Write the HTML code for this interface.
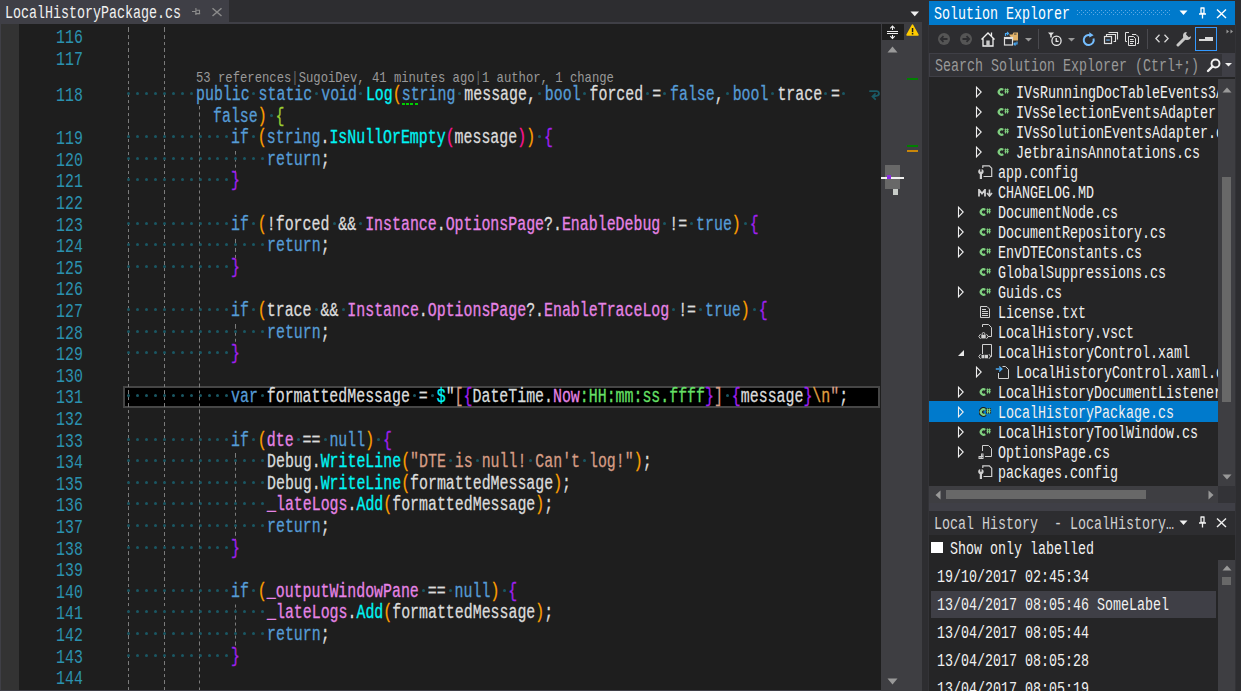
<!DOCTYPE html><html><head><meta charset="utf-8"><style>
*{margin:0;padding:0;box-sizing:border-box}
html,body{width:1241px;height:691px;overflow:hidden;background:#2d2d30}
body{position:relative;font-family:"Liberation Mono",monospace}
.a{position:absolute}
.t{position:absolute;white-space:pre;transform-origin:0 0}
.c{-webkit-text-stroke:0.3px currentColor}
.dot{position:absolute;width:3px;height:3px;border-radius:50%;background:#1a5763}
.g{position:absolute;width:1px;background:repeating-linear-gradient(to bottom,#7c7c7c 0,#7c7c7c 3.4px,transparent 3.4px,transparent 6.45px)}
</style></head><body>
<div class="a" style="left:0px;top:0px;width:929px;height:22px;background:#2d2d30;"></div>
<div class="a" style="left:0px;top:0px;width:229px;height:22px;background:#3f3f46;"></div>
<div class="t " style="left:5.00px;top:3.83px;font-size:17.5px;line-height:19.824px;transform:scaleX(0.7619);color:#f1f1f1;">LocalHistoryPackage.cs</div>
<svg class="a" style="left:191px;top:7px" width="11" height="10" viewBox="0 0 11 10"><path d="M1 4.5H4.5M4.9 1V8M4.9 3.3H8.5V6.5H4.9" stroke="#8c8c8c" stroke-width="1.1" fill="none"/><rect x="4.5" y="6" width="4.6" height="1.3" fill="#8c8c8c"/></svg>
<svg class="a" style="left:211px;top:7px" width="12" height="10" viewBox="0 0 12 10"><path d="M1.5 1.2L10.5 9M10.5 1.2L1.5 9" stroke="#8a8a8a" stroke-width="1.5" fill="none"/></svg>
<svg class="a" style="left:910px;top:11px" width="10" height="6" viewBox="0 0 10 6"><path d="M0.5 0.5H9L4.75 5.2Z" fill="#f0f0f0"/></svg>
<div class="a" style="left:0px;top:22px;width:922px;height:2px;background:#3f3f46;"></div>
<div class="a" style="left:0px;top:24px;width:1px;height:667px;background:#3f3f46;"></div>
<div class="a" style="left:1px;top:24px;width:18px;height:666px;background:#333333;"></div>
<div class="a" style="left:19px;top:24px;width:862px;height:666px;background:#1e1e1e;"></div>
<div class="a" style="left:0px;top:690px;width:881px;height:1px;background:#3f3f46;"></div>
<div class="a" style="left:881px;top:22px;width:41px;height:669px;background:#3e3e42;"></div>
<div class="a" style="left:922px;top:0px;width:7px;height:691px;background:#2d2d30;"></div>
<div class="a" style="left:928px;top:24px;width:1px;height:667px;background:#333337;"></div>
<div class="t " style="left:56.00px;top:27.35px;font-size:20px;line-height:22.656px;transform:scaleX(0.7450);color:#2b91af;">116</div>
<div class="t " style="left:56.00px;top:49.35px;font-size:20px;line-height:22.656px;transform:scaleX(0.7450);color:#2b91af;">117</div>
<div class="t " style="left:56.00px;top:85.35px;font-size:20px;line-height:22.656px;transform:scaleX(0.7450);color:#2b91af;">118</div>
<div class="t " style="left:56.00px;top:128.35px;font-size:20px;line-height:22.656px;transform:scaleX(0.7450);color:#2b91af;">119</div>
<div class="t " style="left:56.00px;top:150.35px;font-size:20px;line-height:22.656px;transform:scaleX(0.7450);color:#2b91af;">120</div>
<div class="t " style="left:56.00px;top:171.35px;font-size:20px;line-height:22.656px;transform:scaleX(0.7450);color:#2b91af;">121</div>
<div class="t " style="left:56.00px;top:193.35px;font-size:20px;line-height:22.656px;transform:scaleX(0.7450);color:#2b91af;">122</div>
<div class="t " style="left:56.00px;top:215.35px;font-size:20px;line-height:22.656px;transform:scaleX(0.7450);color:#2b91af;">123</div>
<div class="t " style="left:56.00px;top:236.35px;font-size:20px;line-height:22.656px;transform:scaleX(0.7450);color:#2b91af;">124</div>
<div class="t " style="left:56.00px;top:258.35px;font-size:20px;line-height:22.656px;transform:scaleX(0.7450);color:#2b91af;">125</div>
<div class="t " style="left:56.00px;top:279.35px;font-size:20px;line-height:22.656px;transform:scaleX(0.7450);color:#2b91af;">126</div>
<div class="t " style="left:56.00px;top:301.35px;font-size:20px;line-height:22.656px;transform:scaleX(0.7450);color:#2b91af;">127</div>
<div class="t " style="left:56.00px;top:323.35px;font-size:20px;line-height:22.656px;transform:scaleX(0.7450);color:#2b91af;">128</div>
<div class="t " style="left:56.00px;top:344.35px;font-size:20px;line-height:22.656px;transform:scaleX(0.7450);color:#2b91af;">129</div>
<div class="t " style="left:56.00px;top:366.35px;font-size:20px;line-height:22.656px;transform:scaleX(0.7450);color:#2b91af;">130</div>
<div class="t " style="left:56.00px;top:387.35px;font-size:20px;line-height:22.656px;transform:scaleX(0.7450);color:#2b91af;">131</div>
<div class="t " style="left:56.00px;top:409.35px;font-size:20px;line-height:22.656px;transform:scaleX(0.7450);color:#2b91af;">132</div>
<div class="t " style="left:56.00px;top:431.35px;font-size:20px;line-height:22.656px;transform:scaleX(0.7450);color:#2b91af;">133</div>
<div class="t " style="left:56.00px;top:452.35px;font-size:20px;line-height:22.656px;transform:scaleX(0.7450);color:#2b91af;">134</div>
<div class="t " style="left:56.00px;top:474.35px;font-size:20px;line-height:22.656px;transform:scaleX(0.7450);color:#2b91af;">135</div>
<div class="t " style="left:56.00px;top:495.35px;font-size:20px;line-height:22.656px;transform:scaleX(0.7450);color:#2b91af;">136</div>
<div class="t " style="left:56.00px;top:517.35px;font-size:20px;line-height:22.656px;transform:scaleX(0.7450);color:#2b91af;">137</div>
<div class="t " style="left:56.00px;top:539.35px;font-size:20px;line-height:22.656px;transform:scaleX(0.7450);color:#2b91af;">138</div>
<div class="t " style="left:56.00px;top:560.35px;font-size:20px;line-height:22.656px;transform:scaleX(0.7450);color:#2b91af;">139</div>
<div class="t " style="left:56.00px;top:582.35px;font-size:20px;line-height:22.656px;transform:scaleX(0.7450);color:#2b91af;">140</div>
<div class="t " style="left:56.00px;top:603.35px;font-size:20px;line-height:22.656px;transform:scaleX(0.7450);color:#2b91af;">141</div>
<div class="t " style="left:56.00px;top:625.35px;font-size:20px;line-height:22.656px;transform:scaleX(0.7450);color:#2b91af;">142</div>
<div class="t " style="left:56.00px;top:647.35px;font-size:20px;line-height:22.656px;transform:scaleX(0.7450);color:#2b91af;">143</div>
<div class="t " style="left:56.00px;top:668.35px;font-size:20px;line-height:22.656px;transform:scaleX(0.7450);color:#2b91af;">144</div>
<div class="a" style="left:123px;top:386px;width:757px;height:22px;background:#000000;border:2px solid #464646;"></div>
<div class="g" style="left:128px;top:24.0px;height:666.0px;background-position:0 5.06px"></div>
<div class="g" style="left:164px;top:24.0px;height:666.0px;background-position:0 5.06px"></div>
<div class="g" style="left:199px;top:106.0px;height:584.0px;background-position:0 0.46px"></div>
<div class="g" style="left:235px;top:151.0px;height:21.6px;background-position:0 0.61px"></div>
<div class="g" style="left:235px;top:237.0px;height:21.6px;background-position:0 4.91px"></div>
<div class="g" style="left:235px;top:324.0px;height:21.6px;background-position:0 1.76px"></div>
<div class="g" style="left:235px;top:453.0px;height:86.6px;background-position:0 1.76px"></div>
<div class="g" style="left:235px;top:604.0px;height:43.6px;background-position:0 5.56px"></div>
<div class="dot" style="left:127.0px;top:92.0px"></div>
<div class="dot" style="left:135.9px;top:92.0px"></div>
<div class="dot" style="left:144.9px;top:92.0px"></div>
<div class="dot" style="left:153.8px;top:92.0px"></div>
<div class="dot" style="left:162.8px;top:92.0px"></div>
<div class="dot" style="left:171.7px;top:92.0px"></div>
<div class="dot" style="left:180.6px;top:92.0px"></div>
<div class="dot" style="left:189.6px;top:92.0px"></div>
<div class="dot" style="left:252.2px;top:92.0px"></div>
<div class="dot" style="left:314.7px;top:92.0px"></div>
<div class="dot" style="left:359.4px;top:92.0px"></div>
<div class="dot" style="left:457.8px;top:92.0px"></div>
<div class="dot" style="left:538.2px;top:92.0px"></div>
<div class="dot" style="left:582.9px;top:92.0px"></div>
<div class="dot" style="left:645.5px;top:92.0px"></div>
<div class="dot" style="left:663.4px;top:92.0px"></div>
<div class="dot" style="left:726.0px;top:92.0px"></div>
<div class="dot" style="left:770.7px;top:92.0px"></div>
<div class="dot" style="left:824.3px;top:92.0px"></div>
<div class="dot" style="left:842.2px;top:92.0px"></div>
<div class="t c" style="left:195.52px;top:84.35px;font-size:20px;line-height:22.656px;transform:scaleX(0.7450);color:#dcdcdc;"><span style="color:#569cd6">public</span> <span style="color:#569cd6">static</span> <span style="color:#569cd6">void</span> <span style="color:#00f5f5">Log</span><span style="color:#ffa000">(</span><span style="color:#569cd6">string</span> <span style="color:#dcdcdc">message</span><span style="color:#dcdcdc">,</span> <span style="color:#569cd6">bool</span> <span style="color:#dcdcdc">forced</span> <span style="color:#dcdcdc">=</span> <span style="color:#569cd6">false</span><span style="color:#dcdcdc">,</span> <span style="color:#569cd6">bool</span> <span style="color:#dcdcdc">trace</span> <span style="color:#dcdcdc">=</span> </div>
<div class="dot" style="left:270.0px;top:114.0px"></div>
<div class="t c" style="left:213.40px;top:106.35px;font-size:20px;line-height:22.656px;transform:scaleX(0.7450);color:#dcdcdc;"><span style="color:#569cd6">false</span><span style="color:#ffa000">)</span> <span style="color:#9acd32">{</span></div>
<div class="dot" style="left:127.0px;top:135.0px"></div>
<div class="dot" style="left:135.9px;top:135.0px"></div>
<div class="dot" style="left:144.9px;top:135.0px"></div>
<div class="dot" style="left:153.8px;top:135.0px"></div>
<div class="dot" style="left:162.8px;top:135.0px"></div>
<div class="dot" style="left:171.7px;top:135.0px"></div>
<div class="dot" style="left:180.6px;top:135.0px"></div>
<div class="dot" style="left:189.6px;top:135.0px"></div>
<div class="dot" style="left:198.5px;top:135.0px"></div>
<div class="dot" style="left:207.5px;top:135.0px"></div>
<div class="dot" style="left:216.4px;top:135.0px"></div>
<div class="dot" style="left:225.3px;top:135.0px"></div>
<div class="dot" style="left:252.2px;top:135.0px"></div>
<div class="dot" style="left:538.2px;top:135.0px"></div>
<div class="t c" style="left:231.28px;top:127.35px;font-size:20px;line-height:22.656px;transform:scaleX(0.7450);color:#dcdcdc;"><span style="color:#569cd6">if</span> <span style="color:#ffa000">(</span><span style="color:#569cd6">string</span><span style="color:#dcdcdc">.</span><span style="color:#00f5f5">IsNullOrEmpty</span><span style="color:#ff1493">(</span><span style="color:#dcdcdc">message</span><span style="color:#ff1493">)</span><span style="color:#ffa000">)</span> <span style="color:#a020f0">{</span></div>
<div class="dot" style="left:127.0px;top:157.0px"></div>
<div class="dot" style="left:135.9px;top:157.0px"></div>
<div class="dot" style="left:144.9px;top:157.0px"></div>
<div class="dot" style="left:153.8px;top:157.0px"></div>
<div class="dot" style="left:162.8px;top:157.0px"></div>
<div class="dot" style="left:171.7px;top:157.0px"></div>
<div class="dot" style="left:180.6px;top:157.0px"></div>
<div class="dot" style="left:189.6px;top:157.0px"></div>
<div class="dot" style="left:198.5px;top:157.0px"></div>
<div class="dot" style="left:207.5px;top:157.0px"></div>
<div class="dot" style="left:216.4px;top:157.0px"></div>
<div class="dot" style="left:225.3px;top:157.0px"></div>
<div class="dot" style="left:234.3px;top:157.0px"></div>
<div class="dot" style="left:243.2px;top:157.0px"></div>
<div class="dot" style="left:252.2px;top:157.0px"></div>
<div class="dot" style="left:261.1px;top:157.0px"></div>
<div class="t c" style="left:267.04px;top:149.35px;font-size:20px;line-height:22.656px;transform:scaleX(0.7450);color:#dcdcdc;"><span style="color:#569cd6">return</span><span style="color:#dcdcdc">;</span></div>
<div class="dot" style="left:127.0px;top:178.0px"></div>
<div class="dot" style="left:135.9px;top:178.0px"></div>
<div class="dot" style="left:144.9px;top:178.0px"></div>
<div class="dot" style="left:153.8px;top:178.0px"></div>
<div class="dot" style="left:162.8px;top:178.0px"></div>
<div class="dot" style="left:171.7px;top:178.0px"></div>
<div class="dot" style="left:180.6px;top:178.0px"></div>
<div class="dot" style="left:189.6px;top:178.0px"></div>
<div class="dot" style="left:198.5px;top:178.0px"></div>
<div class="dot" style="left:207.5px;top:178.0px"></div>
<div class="dot" style="left:216.4px;top:178.0px"></div>
<div class="dot" style="left:225.3px;top:178.0px"></div>
<div class="t c" style="left:231.28px;top:170.35px;font-size:20px;line-height:22.656px;transform:scaleX(0.7450);color:#dcdcdc;"><span style="color:#a020f0">}</span></div>
<div class="dot" style="left:127.0px;top:222.0px"></div>
<div class="dot" style="left:135.9px;top:222.0px"></div>
<div class="dot" style="left:144.9px;top:222.0px"></div>
<div class="dot" style="left:153.8px;top:222.0px"></div>
<div class="dot" style="left:162.8px;top:222.0px"></div>
<div class="dot" style="left:171.7px;top:222.0px"></div>
<div class="dot" style="left:180.6px;top:222.0px"></div>
<div class="dot" style="left:189.6px;top:222.0px"></div>
<div class="dot" style="left:198.5px;top:222.0px"></div>
<div class="dot" style="left:207.5px;top:222.0px"></div>
<div class="dot" style="left:216.4px;top:222.0px"></div>
<div class="dot" style="left:225.3px;top:222.0px"></div>
<div class="dot" style="left:252.2px;top:222.0px"></div>
<div class="dot" style="left:332.6px;top:222.0px"></div>
<div class="dot" style="left:359.4px;top:222.0px"></div>
<div class="dot" style="left:663.4px;top:222.0px"></div>
<div class="dot" style="left:690.2px;top:222.0px"></div>
<div class="dot" style="left:743.9px;top:222.0px"></div>
<div class="t c" style="left:231.28px;top:214.35px;font-size:20px;line-height:22.656px;transform:scaleX(0.7450);color:#dcdcdc;"><span style="color:#569cd6">if</span> <span style="color:#ffa000">(</span><span style="color:#dcdcdc">!forced</span> <span style="color:#dcdcdc">&amp;&amp;</span> <span style="color:#e684e6">Instance</span><span style="color:#dcdcdc">.</span><span style="color:#e684e6">OptionsPage</span><span style="color:#dcdcdc">?.</span><span style="color:#e684e6">EnableDebug</span> <span style="color:#dcdcdc">!=</span> <span style="color:#569cd6">true</span><span style="color:#ffa000">)</span> <span style="color:#a020f0">{</span></div>
<div class="dot" style="left:127.0px;top:243.0px"></div>
<div class="dot" style="left:135.9px;top:243.0px"></div>
<div class="dot" style="left:144.9px;top:243.0px"></div>
<div class="dot" style="left:153.8px;top:243.0px"></div>
<div class="dot" style="left:162.8px;top:243.0px"></div>
<div class="dot" style="left:171.7px;top:243.0px"></div>
<div class="dot" style="left:180.6px;top:243.0px"></div>
<div class="dot" style="left:189.6px;top:243.0px"></div>
<div class="dot" style="left:198.5px;top:243.0px"></div>
<div class="dot" style="left:207.5px;top:243.0px"></div>
<div class="dot" style="left:216.4px;top:243.0px"></div>
<div class="dot" style="left:225.3px;top:243.0px"></div>
<div class="dot" style="left:234.3px;top:243.0px"></div>
<div class="dot" style="left:243.2px;top:243.0px"></div>
<div class="dot" style="left:252.2px;top:243.0px"></div>
<div class="dot" style="left:261.1px;top:243.0px"></div>
<div class="t c" style="left:267.04px;top:235.35px;font-size:20px;line-height:22.656px;transform:scaleX(0.7450);color:#dcdcdc;"><span style="color:#569cd6">return</span><span style="color:#dcdcdc">;</span></div>
<div class="dot" style="left:127.0px;top:265.0px"></div>
<div class="dot" style="left:135.9px;top:265.0px"></div>
<div class="dot" style="left:144.9px;top:265.0px"></div>
<div class="dot" style="left:153.8px;top:265.0px"></div>
<div class="dot" style="left:162.8px;top:265.0px"></div>
<div class="dot" style="left:171.7px;top:265.0px"></div>
<div class="dot" style="left:180.6px;top:265.0px"></div>
<div class="dot" style="left:189.6px;top:265.0px"></div>
<div class="dot" style="left:198.5px;top:265.0px"></div>
<div class="dot" style="left:207.5px;top:265.0px"></div>
<div class="dot" style="left:216.4px;top:265.0px"></div>
<div class="dot" style="left:225.3px;top:265.0px"></div>
<div class="t c" style="left:231.28px;top:257.35px;font-size:20px;line-height:22.656px;transform:scaleX(0.7450);color:#dcdcdc;"><span style="color:#a020f0">}</span></div>
<div class="dot" style="left:127.0px;top:308.0px"></div>
<div class="dot" style="left:135.9px;top:308.0px"></div>
<div class="dot" style="left:144.9px;top:308.0px"></div>
<div class="dot" style="left:153.8px;top:308.0px"></div>
<div class="dot" style="left:162.8px;top:308.0px"></div>
<div class="dot" style="left:171.7px;top:308.0px"></div>
<div class="dot" style="left:180.6px;top:308.0px"></div>
<div class="dot" style="left:189.6px;top:308.0px"></div>
<div class="dot" style="left:198.5px;top:308.0px"></div>
<div class="dot" style="left:207.5px;top:308.0px"></div>
<div class="dot" style="left:216.4px;top:308.0px"></div>
<div class="dot" style="left:225.3px;top:308.0px"></div>
<div class="dot" style="left:252.2px;top:308.0px"></div>
<div class="dot" style="left:314.7px;top:308.0px"></div>
<div class="dot" style="left:341.6px;top:308.0px"></div>
<div class="dot" style="left:672.3px;top:308.0px"></div>
<div class="dot" style="left:699.2px;top:308.0px"></div>
<div class="dot" style="left:752.8px;top:308.0px"></div>
<div class="t c" style="left:231.28px;top:300.35px;font-size:20px;line-height:22.656px;transform:scaleX(0.7450);color:#dcdcdc;"><span style="color:#569cd6">if</span> <span style="color:#ffa000">(</span><span style="color:#dcdcdc">trace</span> <span style="color:#dcdcdc">&amp;&amp;</span> <span style="color:#e684e6">Instance</span><span style="color:#dcdcdc">.</span><span style="color:#e684e6">OptionsPage</span><span style="color:#dcdcdc">?.</span><span style="color:#e684e6">EnableTraceLog</span> <span style="color:#dcdcdc">!=</span> <span style="color:#569cd6">true</span><span style="color:#ffa000">)</span> <span style="color:#a020f0">{</span></div>
<div class="dot" style="left:127.0px;top:330.0px"></div>
<div class="dot" style="left:135.9px;top:330.0px"></div>
<div class="dot" style="left:144.9px;top:330.0px"></div>
<div class="dot" style="left:153.8px;top:330.0px"></div>
<div class="dot" style="left:162.8px;top:330.0px"></div>
<div class="dot" style="left:171.7px;top:330.0px"></div>
<div class="dot" style="left:180.6px;top:330.0px"></div>
<div class="dot" style="left:189.6px;top:330.0px"></div>
<div class="dot" style="left:198.5px;top:330.0px"></div>
<div class="dot" style="left:207.5px;top:330.0px"></div>
<div class="dot" style="left:216.4px;top:330.0px"></div>
<div class="dot" style="left:225.3px;top:330.0px"></div>
<div class="dot" style="left:234.3px;top:330.0px"></div>
<div class="dot" style="left:243.2px;top:330.0px"></div>
<div class="dot" style="left:252.2px;top:330.0px"></div>
<div class="dot" style="left:261.1px;top:330.0px"></div>
<div class="t c" style="left:267.04px;top:322.35px;font-size:20px;line-height:22.656px;transform:scaleX(0.7450);color:#dcdcdc;"><span style="color:#569cd6">return</span><span style="color:#dcdcdc">;</span></div>
<div class="dot" style="left:127.0px;top:351.0px"></div>
<div class="dot" style="left:135.9px;top:351.0px"></div>
<div class="dot" style="left:144.9px;top:351.0px"></div>
<div class="dot" style="left:153.8px;top:351.0px"></div>
<div class="dot" style="left:162.8px;top:351.0px"></div>
<div class="dot" style="left:171.7px;top:351.0px"></div>
<div class="dot" style="left:180.6px;top:351.0px"></div>
<div class="dot" style="left:189.6px;top:351.0px"></div>
<div class="dot" style="left:198.5px;top:351.0px"></div>
<div class="dot" style="left:207.5px;top:351.0px"></div>
<div class="dot" style="left:216.4px;top:351.0px"></div>
<div class="dot" style="left:225.3px;top:351.0px"></div>
<div class="t c" style="left:231.28px;top:343.35px;font-size:20px;line-height:22.656px;transform:scaleX(0.7450);color:#dcdcdc;"><span style="color:#a020f0">}</span></div>
<div class="dot" style="left:127.0px;top:394.0px"></div>
<div class="dot" style="left:135.9px;top:394.0px"></div>
<div class="dot" style="left:144.9px;top:394.0px"></div>
<div class="dot" style="left:153.8px;top:394.0px"></div>
<div class="dot" style="left:162.8px;top:394.0px"></div>
<div class="dot" style="left:171.7px;top:394.0px"></div>
<div class="dot" style="left:180.6px;top:394.0px"></div>
<div class="dot" style="left:189.6px;top:394.0px"></div>
<div class="dot" style="left:198.5px;top:394.0px"></div>
<div class="dot" style="left:207.5px;top:394.0px"></div>
<div class="dot" style="left:216.4px;top:394.0px"></div>
<div class="dot" style="left:225.3px;top:394.0px"></div>
<div class="dot" style="left:261.1px;top:394.0px"></div>
<div class="dot" style="left:413.1px;top:394.0px"></div>
<div class="dot" style="left:431.0px;top:394.0px"></div>
<div class="dot" style="left:726.0px;top:394.0px"></div>
<div class="t c" style="left:231.28px;top:386.35px;font-size:20px;line-height:22.656px;transform:scaleX(0.7450);color:#dcdcdc;"><span style="color:#569cd6">var</span> <span style="color:#dcdcdc">formattedMessage</span> <span style="color:#dcdcdc">=</span> <span style="color:#00f5f5">$</span><span style="color:#dcdcdc">&quot;</span><span style="color:#d69d85">[</span><span style="color:#a020f0">{</span><span style="color:#d8dcdc">DateTime</span><span style="color:#dcdcdc">.</span><span style="color:#e684e6">Now</span><span style="color:#66e066">:HH:mm:ss.ffff</span><span style="color:#a020f0">}</span><span style="color:#d69d85">]</span> <span style="color:#a020f0">{</span><span style="color:#dcdcdc">message</span><span style="color:#a020f0">}</span><span style="color:#e0a040">\n</span><span style="color:#d69d85">&quot;</span><span style="color:#dcdcdc">;</span></div>
<div class="dot" style="left:127.0px;top:438.0px"></div>
<div class="dot" style="left:135.9px;top:438.0px"></div>
<div class="dot" style="left:144.9px;top:438.0px"></div>
<div class="dot" style="left:153.8px;top:438.0px"></div>
<div class="dot" style="left:162.8px;top:438.0px"></div>
<div class="dot" style="left:171.7px;top:438.0px"></div>
<div class="dot" style="left:180.6px;top:438.0px"></div>
<div class="dot" style="left:189.6px;top:438.0px"></div>
<div class="dot" style="left:198.5px;top:438.0px"></div>
<div class="dot" style="left:207.5px;top:438.0px"></div>
<div class="dot" style="left:216.4px;top:438.0px"></div>
<div class="dot" style="left:225.3px;top:438.0px"></div>
<div class="dot" style="left:252.2px;top:438.0px"></div>
<div class="dot" style="left:296.9px;top:438.0px"></div>
<div class="dot" style="left:323.7px;top:438.0px"></div>
<div class="dot" style="left:377.3px;top:438.0px"></div>
<div class="t c" style="left:231.28px;top:430.35px;font-size:20px;line-height:22.656px;transform:scaleX(0.7450);color:#dcdcdc;"><span style="color:#569cd6">if</span> <span style="color:#ffa000">(</span><span style="color:#e684e6">dte</span> <span style="color:#dcdcdc">==</span> <span style="color:#569cd6">null</span><span style="color:#ffa000">)</span> <span style="color:#a020f0">{</span></div>
<div class="dot" style="left:127.0px;top:459.0px"></div>
<div class="dot" style="left:135.9px;top:459.0px"></div>
<div class="dot" style="left:144.9px;top:459.0px"></div>
<div class="dot" style="left:153.8px;top:459.0px"></div>
<div class="dot" style="left:162.8px;top:459.0px"></div>
<div class="dot" style="left:171.7px;top:459.0px"></div>
<div class="dot" style="left:180.6px;top:459.0px"></div>
<div class="dot" style="left:189.6px;top:459.0px"></div>
<div class="dot" style="left:198.5px;top:459.0px"></div>
<div class="dot" style="left:207.5px;top:459.0px"></div>
<div class="dot" style="left:216.4px;top:459.0px"></div>
<div class="dot" style="left:225.3px;top:459.0px"></div>
<div class="dot" style="left:234.3px;top:459.0px"></div>
<div class="dot" style="left:243.2px;top:459.0px"></div>
<div class="dot" style="left:252.2px;top:459.0px"></div>
<div class="dot" style="left:261.1px;top:459.0px"></div>
<div class="dot" style="left:448.8px;top:459.0px"></div>
<div class="dot" style="left:475.7px;top:459.0px"></div>
<div class="dot" style="left:529.3px;top:459.0px"></div>
<div class="dot" style="left:582.9px;top:459.0px"></div>
<div class="t c" style="left:267.04px;top:451.35px;font-size:20px;line-height:22.656px;transform:scaleX(0.7450);color:#dcdcdc;"><span style="color:#d8dcdc">Debug</span><span style="color:#dcdcdc">.</span><span style="color:#00f5f5">WriteLine</span><span style="color:#ffa000">(</span><span style="color:#d69d85">&quot;DTE</span> <span style="color:#d69d85">is</span> <span style="color:#d69d85">null!</span> <span style="color:#d69d85">Can&#x27;t</span> <span style="color:#d69d85">log!&quot;</span><span style="color:#ffa000">)</span><span style="color:#dcdcdc">;</span></div>
<div class="dot" style="left:127.0px;top:481.0px"></div>
<div class="dot" style="left:135.9px;top:481.0px"></div>
<div class="dot" style="left:144.9px;top:481.0px"></div>
<div class="dot" style="left:153.8px;top:481.0px"></div>
<div class="dot" style="left:162.8px;top:481.0px"></div>
<div class="dot" style="left:171.7px;top:481.0px"></div>
<div class="dot" style="left:180.6px;top:481.0px"></div>
<div class="dot" style="left:189.6px;top:481.0px"></div>
<div class="dot" style="left:198.5px;top:481.0px"></div>
<div class="dot" style="left:207.5px;top:481.0px"></div>
<div class="dot" style="left:216.4px;top:481.0px"></div>
<div class="dot" style="left:225.3px;top:481.0px"></div>
<div class="dot" style="left:234.3px;top:481.0px"></div>
<div class="dot" style="left:243.2px;top:481.0px"></div>
<div class="dot" style="left:252.2px;top:481.0px"></div>
<div class="dot" style="left:261.1px;top:481.0px"></div>
<div class="t c" style="left:267.04px;top:473.35px;font-size:20px;line-height:22.656px;transform:scaleX(0.7450);color:#dcdcdc;"><span style="color:#d8dcdc">Debug</span><span style="color:#dcdcdc">.</span><span style="color:#00f5f5">WriteLine</span><span style="color:#ffa000">(</span><span style="color:#dcdcdc">formattedMessage</span><span style="color:#ffa000">)</span><span style="color:#dcdcdc">;</span></div>
<div class="dot" style="left:127.0px;top:502.0px"></div>
<div class="dot" style="left:135.9px;top:502.0px"></div>
<div class="dot" style="left:144.9px;top:502.0px"></div>
<div class="dot" style="left:153.8px;top:502.0px"></div>
<div class="dot" style="left:162.8px;top:502.0px"></div>
<div class="dot" style="left:171.7px;top:502.0px"></div>
<div class="dot" style="left:180.6px;top:502.0px"></div>
<div class="dot" style="left:189.6px;top:502.0px"></div>
<div class="dot" style="left:198.5px;top:502.0px"></div>
<div class="dot" style="left:207.5px;top:502.0px"></div>
<div class="dot" style="left:216.4px;top:502.0px"></div>
<div class="dot" style="left:225.3px;top:502.0px"></div>
<div class="dot" style="left:234.3px;top:502.0px"></div>
<div class="dot" style="left:243.2px;top:502.0px"></div>
<div class="dot" style="left:252.2px;top:502.0px"></div>
<div class="dot" style="left:261.1px;top:502.0px"></div>
<div class="t c" style="left:267.04px;top:494.35px;font-size:20px;line-height:22.656px;transform:scaleX(0.7450);color:#dcdcdc;"><span style="color:#e684e6">_lateLogs</span><span style="color:#dcdcdc">.</span><span style="color:#00f5f5">Add</span><span style="color:#ffa000">(</span><span style="color:#dcdcdc">formattedMessage</span><span style="color:#ffa000">)</span><span style="color:#dcdcdc">;</span></div>
<div class="dot" style="left:127.0px;top:524.0px"></div>
<div class="dot" style="left:135.9px;top:524.0px"></div>
<div class="dot" style="left:144.9px;top:524.0px"></div>
<div class="dot" style="left:153.8px;top:524.0px"></div>
<div class="dot" style="left:162.8px;top:524.0px"></div>
<div class="dot" style="left:171.7px;top:524.0px"></div>
<div class="dot" style="left:180.6px;top:524.0px"></div>
<div class="dot" style="left:189.6px;top:524.0px"></div>
<div class="dot" style="left:198.5px;top:524.0px"></div>
<div class="dot" style="left:207.5px;top:524.0px"></div>
<div class="dot" style="left:216.4px;top:524.0px"></div>
<div class="dot" style="left:225.3px;top:524.0px"></div>
<div class="dot" style="left:234.3px;top:524.0px"></div>
<div class="dot" style="left:243.2px;top:524.0px"></div>
<div class="dot" style="left:252.2px;top:524.0px"></div>
<div class="dot" style="left:261.1px;top:524.0px"></div>
<div class="t c" style="left:267.04px;top:516.35px;font-size:20px;line-height:22.656px;transform:scaleX(0.7450);color:#dcdcdc;"><span style="color:#569cd6">return</span><span style="color:#dcdcdc">;</span></div>
<div class="dot" style="left:127.0px;top:546.0px"></div>
<div class="dot" style="left:135.9px;top:546.0px"></div>
<div class="dot" style="left:144.9px;top:546.0px"></div>
<div class="dot" style="left:153.8px;top:546.0px"></div>
<div class="dot" style="left:162.8px;top:546.0px"></div>
<div class="dot" style="left:171.7px;top:546.0px"></div>
<div class="dot" style="left:180.6px;top:546.0px"></div>
<div class="dot" style="left:189.6px;top:546.0px"></div>
<div class="dot" style="left:198.5px;top:546.0px"></div>
<div class="dot" style="left:207.5px;top:546.0px"></div>
<div class="dot" style="left:216.4px;top:546.0px"></div>
<div class="dot" style="left:225.3px;top:546.0px"></div>
<div class="t c" style="left:231.28px;top:538.35px;font-size:20px;line-height:22.656px;transform:scaleX(0.7450);color:#dcdcdc;"><span style="color:#a020f0">}</span></div>
<div class="dot" style="left:127.0px;top:589.0px"></div>
<div class="dot" style="left:135.9px;top:589.0px"></div>
<div class="dot" style="left:144.9px;top:589.0px"></div>
<div class="dot" style="left:153.8px;top:589.0px"></div>
<div class="dot" style="left:162.8px;top:589.0px"></div>
<div class="dot" style="left:171.7px;top:589.0px"></div>
<div class="dot" style="left:180.6px;top:589.0px"></div>
<div class="dot" style="left:189.6px;top:589.0px"></div>
<div class="dot" style="left:198.5px;top:589.0px"></div>
<div class="dot" style="left:207.5px;top:589.0px"></div>
<div class="dot" style="left:216.4px;top:589.0px"></div>
<div class="dot" style="left:225.3px;top:589.0px"></div>
<div class="dot" style="left:252.2px;top:589.0px"></div>
<div class="dot" style="left:422.0px;top:589.0px"></div>
<div class="dot" style="left:448.8px;top:589.0px"></div>
<div class="dot" style="left:502.5px;top:589.0px"></div>
<div class="t c" style="left:231.28px;top:581.35px;font-size:20px;line-height:22.656px;transform:scaleX(0.7450);color:#dcdcdc;"><span style="color:#569cd6">if</span> <span style="color:#ffa000">(</span><span style="color:#e684e6">_outputWindowPane</span> <span style="color:#dcdcdc">==</span> <span style="color:#569cd6">null</span><span style="color:#ffa000">)</span> <span style="color:#a020f0">{</span></div>
<div class="dot" style="left:127.0px;top:610.0px"></div>
<div class="dot" style="left:135.9px;top:610.0px"></div>
<div class="dot" style="left:144.9px;top:610.0px"></div>
<div class="dot" style="left:153.8px;top:610.0px"></div>
<div class="dot" style="left:162.8px;top:610.0px"></div>
<div class="dot" style="left:171.7px;top:610.0px"></div>
<div class="dot" style="left:180.6px;top:610.0px"></div>
<div class="dot" style="left:189.6px;top:610.0px"></div>
<div class="dot" style="left:198.5px;top:610.0px"></div>
<div class="dot" style="left:207.5px;top:610.0px"></div>
<div class="dot" style="left:216.4px;top:610.0px"></div>
<div class="dot" style="left:225.3px;top:610.0px"></div>
<div class="dot" style="left:234.3px;top:610.0px"></div>
<div class="dot" style="left:243.2px;top:610.0px"></div>
<div class="dot" style="left:252.2px;top:610.0px"></div>
<div class="dot" style="left:261.1px;top:610.0px"></div>
<div class="t c" style="left:267.04px;top:602.35px;font-size:20px;line-height:22.656px;transform:scaleX(0.7450);color:#dcdcdc;"><span style="color:#e684e6">_lateLogs</span><span style="color:#dcdcdc">.</span><span style="color:#00f5f5">Add</span><span style="color:#ffa000">(</span><span style="color:#dcdcdc">formattedMessage</span><span style="color:#ffa000">)</span><span style="color:#dcdcdc">;</span></div>
<div class="dot" style="left:127.0px;top:632.0px"></div>
<div class="dot" style="left:135.9px;top:632.0px"></div>
<div class="dot" style="left:144.9px;top:632.0px"></div>
<div class="dot" style="left:153.8px;top:632.0px"></div>
<div class="dot" style="left:162.8px;top:632.0px"></div>
<div class="dot" style="left:171.7px;top:632.0px"></div>
<div class="dot" style="left:180.6px;top:632.0px"></div>
<div class="dot" style="left:189.6px;top:632.0px"></div>
<div class="dot" style="left:198.5px;top:632.0px"></div>
<div class="dot" style="left:207.5px;top:632.0px"></div>
<div class="dot" style="left:216.4px;top:632.0px"></div>
<div class="dot" style="left:225.3px;top:632.0px"></div>
<div class="dot" style="left:234.3px;top:632.0px"></div>
<div class="dot" style="left:243.2px;top:632.0px"></div>
<div class="dot" style="left:252.2px;top:632.0px"></div>
<div class="dot" style="left:261.1px;top:632.0px"></div>
<div class="t c" style="left:267.04px;top:624.35px;font-size:20px;line-height:22.656px;transform:scaleX(0.7450);color:#dcdcdc;"><span style="color:#569cd6">return</span><span style="color:#dcdcdc">;</span></div>
<div class="dot" style="left:127.0px;top:654.0px"></div>
<div class="dot" style="left:135.9px;top:654.0px"></div>
<div class="dot" style="left:144.9px;top:654.0px"></div>
<div class="dot" style="left:153.8px;top:654.0px"></div>
<div class="dot" style="left:162.8px;top:654.0px"></div>
<div class="dot" style="left:171.7px;top:654.0px"></div>
<div class="dot" style="left:180.6px;top:654.0px"></div>
<div class="dot" style="left:189.6px;top:654.0px"></div>
<div class="dot" style="left:198.5px;top:654.0px"></div>
<div class="dot" style="left:207.5px;top:654.0px"></div>
<div class="dot" style="left:216.4px;top:654.0px"></div>
<div class="dot" style="left:225.3px;top:654.0px"></div>
<div class="t c" style="left:231.28px;top:646.35px;font-size:20px;line-height:22.656px;transform:scaleX(0.7450);color:#dcdcdc;"><span style="color:#a020f0">}</span></div>
<div class="t " style="left:196.00px;top:69.71px;font-size:15px;line-height:16.992px;transform:scaleX(0.8144);color:#999999;">53 references<span style="color:#6a6a6a">|</span>SugoiDev, 41 minutes ago<span style="color:#6a6a6a">|</span>1 author, 1 change</div>
<div class="a" style="left:402px;top:103px;width:17px;height:2px;background:repeating-linear-gradient(to right,#00d000 0,#00d000 3px,transparent 3px,transparent 4.2px)"></div>
<svg class="a" style="left:867px;top:87px" width="16" height="16" viewBox="0 0 16 16"><path d="M3 4.2H9.5C12.2 4.2 13 7.8 10.2 8.6L6.2 9.6M8 7L5.5 9.6L8.2 12.2" stroke="#1a5a66" stroke-width="1.8" fill="none" stroke-linecap="round"/></svg>
<div class="a" style="left:882px;top:24px;width:22px;height:16px;background:#1e1e1e;"></div>
<svg class="a" style="left:882px;top:24px" width="22" height="16" viewBox="0 0 22 16"><path d="M5 7.5H16M5 9.5H16M10.5 2V6M10.5 11V14.5" stroke="#f0f0f0" stroke-width="1" fill="none"/><path d="M8.3 4.3L10.5 2L12.7 4.3M8.3 12.2L10.5 14.5L12.7 12.2" stroke="#f0f0f0" stroke-width="1.1" fill="none"/></svg>
<svg class="a" style="left:906px;top:24px" width="13" height="13" viewBox="0 0 13 13"><path d="M6.5 1.2L11.9 11H1.1Z" fill="#ffcc00" stroke="#ffcc00" stroke-width="1.6" stroke-linejoin="round"/><rect x="5.8" y="4" width="1.5" height="4.2" fill="#1e1e1e"/><rect x="5.8" y="9" width="1.5" height="1.5" fill="#1e1e1e"/></svg>
<svg class="a" style="left:887px;top:46px" width="11" height="7" viewBox="0 0 11 7"><path d="M0.5 6.5H10.5L5.5 0.5Z" fill="#999999"/></svg>
<div class="a" style="left:907px;top:78px;width:11px;height:2px;background:#008000;"></div>
<div class="a" style="left:907px;top:145px;width:11px;height:2px;background:#008000;"></div>
<div class="a" style="left:907px;top:150px;width:11px;height:2px;background:#c8860a;"></div>
<div class="a" style="left:885px;top:165px;width:15px;height:24px;background:#686868;"></div>
<div class="a" style="left:881px;top:177px;width:23px;height:2px;background:#f0f0f0;"></div>
<div class="a" style="left:887px;top:175px;width:4px;height:4px;background:#8a2be2;"></div>
<div class="a" style="left:893px;top:189px;width:5px;height:6px;background:#c8ccc8;"></div>
<svg class="a" style="left:887px;top:678px" width="11" height="7" viewBox="0 0 11 7"><path d="M0.5 0.5H10.5L5.5 6.5Z" fill="#999999"/></svg>
<div class="a" style="left:929px;top:1px;width:306px;height:24px;background:#007acc;"></div>
<div class="t " style="left:934.00px;top:4.63px;font-size:17.5px;line-height:19.824px;transform:scaleX(0.7619);color:#ffffff;">Solution Explorer</div>
<svg class="a" style="left:1077px;top:10px" width="94" height="5"><rect x="0" y="0" width="1" height="1" fill="#5fa9e3"/><rect x="4" y="0" width="1" height="1" fill="#5fa9e3"/><rect x="8" y="0" width="1" height="1" fill="#5fa9e3"/><rect x="12" y="0" width="1" height="1" fill="#5fa9e3"/><rect x="16" y="0" width="1" height="1" fill="#5fa9e3"/><rect x="20" y="0" width="1" height="1" fill="#5fa9e3"/><rect x="24" y="0" width="1" height="1" fill="#5fa9e3"/><rect x="28" y="0" width="1" height="1" fill="#5fa9e3"/><rect x="32" y="0" width="1" height="1" fill="#5fa9e3"/><rect x="36" y="0" width="1" height="1" fill="#5fa9e3"/><rect x="40" y="0" width="1" height="1" fill="#5fa9e3"/><rect x="44" y="0" width="1" height="1" fill="#5fa9e3"/><rect x="48" y="0" width="1" height="1" fill="#5fa9e3"/><rect x="52" y="0" width="1" height="1" fill="#5fa9e3"/><rect x="56" y="0" width="1" height="1" fill="#5fa9e3"/><rect x="60" y="0" width="1" height="1" fill="#5fa9e3"/><rect x="64" y="0" width="1" height="1" fill="#5fa9e3"/><rect x="68" y="0" width="1" height="1" fill="#5fa9e3"/><rect x="72" y="0" width="1" height="1" fill="#5fa9e3"/><rect x="76" y="0" width="1" height="1" fill="#5fa9e3"/><rect x="80" y="0" width="1" height="1" fill="#5fa9e3"/><rect x="84" y="0" width="1" height="1" fill="#5fa9e3"/><rect x="88" y="0" width="1" height="1" fill="#5fa9e3"/><rect x="92" y="0" width="1" height="1" fill="#5fa9e3"/><rect x="2" y="2" width="1" height="1" fill="#5fa9e3"/><rect x="6" y="2" width="1" height="1" fill="#5fa9e3"/><rect x="10" y="2" width="1" height="1" fill="#5fa9e3"/><rect x="14" y="2" width="1" height="1" fill="#5fa9e3"/><rect x="18" y="2" width="1" height="1" fill="#5fa9e3"/><rect x="22" y="2" width="1" height="1" fill="#5fa9e3"/><rect x="26" y="2" width="1" height="1" fill="#5fa9e3"/><rect x="30" y="2" width="1" height="1" fill="#5fa9e3"/><rect x="34" y="2" width="1" height="1" fill="#5fa9e3"/><rect x="38" y="2" width="1" height="1" fill="#5fa9e3"/><rect x="42" y="2" width="1" height="1" fill="#5fa9e3"/><rect x="46" y="2" width="1" height="1" fill="#5fa9e3"/><rect x="50" y="2" width="1" height="1" fill="#5fa9e3"/><rect x="54" y="2" width="1" height="1" fill="#5fa9e3"/><rect x="58" y="2" width="1" height="1" fill="#5fa9e3"/><rect x="62" y="2" width="1" height="1" fill="#5fa9e3"/><rect x="66" y="2" width="1" height="1" fill="#5fa9e3"/><rect x="70" y="2" width="1" height="1" fill="#5fa9e3"/><rect x="74" y="2" width="1" height="1" fill="#5fa9e3"/><rect x="78" y="2" width="1" height="1" fill="#5fa9e3"/><rect x="82" y="2" width="1" height="1" fill="#5fa9e3"/><rect x="86" y="2" width="1" height="1" fill="#5fa9e3"/><rect x="90" y="2" width="1" height="1" fill="#5fa9e3"/><rect x="0" y="4" width="1" height="1" fill="#5fa9e3"/><rect x="4" y="4" width="1" height="1" fill="#5fa9e3"/><rect x="8" y="4" width="1" height="1" fill="#5fa9e3"/><rect x="12" y="4" width="1" height="1" fill="#5fa9e3"/><rect x="16" y="4" width="1" height="1" fill="#5fa9e3"/><rect x="20" y="4" width="1" height="1" fill="#5fa9e3"/><rect x="24" y="4" width="1" height="1" fill="#5fa9e3"/><rect x="28" y="4" width="1" height="1" fill="#5fa9e3"/><rect x="32" y="4" width="1" height="1" fill="#5fa9e3"/><rect x="36" y="4" width="1" height="1" fill="#5fa9e3"/><rect x="40" y="4" width="1" height="1" fill="#5fa9e3"/><rect x="44" y="4" width="1" height="1" fill="#5fa9e3"/><rect x="48" y="4" width="1" height="1" fill="#5fa9e3"/><rect x="52" y="4" width="1" height="1" fill="#5fa9e3"/><rect x="56" y="4" width="1" height="1" fill="#5fa9e3"/><rect x="60" y="4" width="1" height="1" fill="#5fa9e3"/><rect x="64" y="4" width="1" height="1" fill="#5fa9e3"/><rect x="68" y="4" width="1" height="1" fill="#5fa9e3"/><rect x="72" y="4" width="1" height="1" fill="#5fa9e3"/><rect x="76" y="4" width="1" height="1" fill="#5fa9e3"/><rect x="80" y="4" width="1" height="1" fill="#5fa9e3"/><rect x="84" y="4" width="1" height="1" fill="#5fa9e3"/><rect x="88" y="4" width="1" height="1" fill="#5fa9e3"/><rect x="92" y="4" width="1" height="1" fill="#5fa9e3"/></svg>
<svg class="a" style="left:1179px;top:10px" width="9" height="6" viewBox="0 0 9 6"><path d="M0.5 0.5H8.5L4.5 5Z" fill="#ffffff"/></svg>
<svg class="a" style="left:1197px;top:7px" width="11" height="12" viewBox="0 0 11 12"><path d="M3.5 1H7.5M4 1V6.5H7V1M2 7H9M5.5 7V11.5" stroke="#ffffff" stroke-width="1.3" fill="none"/></svg>
<svg class="a" style="left:1216px;top:8px" width="11" height="11" viewBox="0 0 11 11"><path d="M1 1.5L10 10M10 1.5L1 10" stroke="#ffffff" stroke-width="1.4" fill="none"/></svg>
<div class="a" style="left:929px;top:25px;width:306px;height:28px;background:#2d2d30;"></div>
<div class="a" style="left:1235px;top:24px;width:1px;height:667px;background:#333337;"></div>
<svg class="a" style="left:937px;top:32px" width="14" height="14" viewBox="0 0 14 14"><circle cx="7" cy="7" r="6" fill="#555555"/><path d="M10.5 7H4M6.5 4.2L3.8 7L6.5 9.8" stroke="#2d2d30" stroke-width="1.8" fill="none"/></svg>
<svg class="a" style="left:959px;top:32px" width="14" height="14" viewBox="0 0 14 14"><circle cx="7" cy="7" r="6" fill="#555555"/><path d="M3.5 7H10M7.5 4.2L10.2 7L7.5 9.8" stroke="#2d2d30" stroke-width="1.8" fill="none"/></svg>
<svg class="a" style="left:980px;top:31px" width="16" height="16" viewBox="0 0 16 16"><path d="M1.5 8.5L8 2L14.5 8.5M3 7V15H13V7M11.5 5V1.5" stroke="#f0f0f0" stroke-width="1.3" fill="none"/><rect x="6.3" y="9.5" width="3.4" height="5.5" fill="#c8c8c8"/></svg>
<svg class="a" style="left:1003px;top:31px" width="16" height="16" viewBox="0 0 16 16"><path d="M6 3.5H9.5L10.5 1.5H15V9.5H10" fill="#e3b46b"/><rect x="11" y="2.6" width="2.5" height="0.9" fill="#2d2d30"/><rect x="1.5" y="6.5" width="8" height="7.5" fill="#2d2d30" stroke="#e0e0e0" stroke-width="1.2"/><rect x="1.5" y="6.5" width="8" height="1.6" fill="#e0e0e0"/><path d="M2.5 5V2.5H5M4 1L5.5 2.5L4 4" stroke="#4aa8f0" stroke-width="1.2" fill="none"/><path d="M14 10.5V13H11.5M12.5 11.5L11 13L12.5 14.5" stroke="#4aa8f0" stroke-width="1.2" fill="none"/></svg>
<svg class="a" style="left:1025px;top:38px" width="7" height="4" viewBox="0 0 7 4"><path d="M0 0H7L3.5 3.5Z" fill="#999999"/></svg>
<div class="a" style="left:1038px;top:29px;width:1px;height:20px;background:#4a4a4f;"></div>
<svg class="a" style="left:1047px;top:31px" width="16" height="16" viewBox="0 0 16 16"><path d="M1 1.5H7L4.8 4V6.5H3.2V4Z" fill="#e0e0e0"/><circle cx="9.5" cy="9.8" r="4.6" stroke="#e8e8e8" stroke-width="1.3" fill="none"/><path d="M9.2 7V10.3H11.6" stroke="#e8e8e8" stroke-width="1.3" fill="none"/></svg>
<svg class="a" style="left:1068px;top:38px" width="7" height="4" viewBox="0 0 7 4"><path d="M0 0H7L3.5 3.5Z" fill="#999999"/></svg>
<svg class="a" style="left:1081px;top:31px" width="16" height="16" viewBox="0 0 16 16"><path d="M9.6 4.4A5 5 0 1 0 12.5 7.5" stroke="#75beff" stroke-width="2" fill="none"/><path d="M8.3 1.2L12.6 4.2L8.3 6.6Z" fill="#75beff"/></svg>
<svg class="a" style="left:1103px;top:31px" width="16" height="16" viewBox="0 0 16 16"><path d="M3.5 5.5V3.5H12.5V10.5H10.5" stroke="#e0e0e0" stroke-width="1.1" fill="none"/><path d="M5.5 1.5H14.5V8.5" stroke="#e0e0e0" stroke-width="1.1" fill="none"/><rect x="1.5" y="5.5" width="7" height="7" fill="#2d2d30" stroke="#e0e0e0" stroke-width="1.2"/><rect x="3.2" y="8.5" width="3.6" height="1.1" fill="#75beff"/></svg>
<svg class="a" style="left:1124px;top:31px" width="16" height="16" viewBox="0 0 16 16"><path d="M5 1.5H1.5V10.5H3M8 3.5H12L14.5 6V12.5H13" stroke="#e0e0e0" stroke-width="1" fill="none"/><path d="M4.5 5.5H9.5L11.5 7.5V14.5H4.5Z" fill="#2d2d30" stroke="#e0e0e0" stroke-width="1"/><path d="M6 8.5H9.5M6 10.5H10M6 12.5H9" stroke="#e0e0e0" stroke-width="1"/></svg>
<div class="a" style="left:1147px;top:29px;width:1px;height:20px;background:#4a4a4f;"></div>
<svg class="a" style="left:1155px;top:34px" width="14" height="10" viewBox="0 0 14 10"><path d="M4.5 0.8L0.9 4.5L4.5 8.2M9.5 0.8L13.1 4.5L9.5 8.2" stroke="#d8d8d8" stroke-width="1.3" fill="none"/></svg>
<svg class="a" style="left:1176px;top:31px" width="16" height="16" viewBox="0 0 16 16"><path d="M2 14L8.5 7.5" stroke="#c8c8c8" stroke-width="3" stroke-linecap="round"/><path d="M10.8 1A4 4 0 1 0 15 5.2L12.7 6.2L10 3.4Z" fill="#c8c8c8"/></svg>
<div class="a" style="left:1195px;top:27px;width:22px;height:24px;background:#2d2d30;border:1px solid #3399ff;"></div>
<div class="a" style="left:1199px;top:39px;width:14px;height:2px;background:#d8d8d8;"></div>
<div class="a" style="left:1205px;top:37px;width:8px;height:4px;background:#d8d8d8;"></div>
<svg class="a" style="left:1226px;top:29px" width="8" height="5" viewBox="0 0 8 5"><path d="M0.5 0.5L3 2.5L0.5 4.5ZM4.5 0.5L7 2.5L4.5 4.5Z" fill="#999999"/></svg>
<div class="a" style="left:929px;top:53px;width:294px;height:24px;background:#333337;border:1px solid #3f3f46;"></div>
<div class="a" style="left:1223px;top:53px;width:12px;height:24px;background:#3f3f46;"></div>
<div class="t " style="left:935.00px;top:57.03px;font-size:17.5px;line-height:19.824px;transform:scaleX(0.7619);color:#999999;">Search Solution Explorer (Ctrl+;)</div>
<svg class="a" style="left:1206px;top:58px" width="15" height="15" viewBox="0 0 15 15"><circle cx="9.5" cy="5.5" r="4" stroke="#f0f0f0" stroke-width="1.9" fill="none"/><path d="M6.6 8.4L2 13" stroke="#f0f0f0" stroke-width="2.4" stroke-linecap="round"/></svg>
<svg class="a" style="left:1225px;top:63px" width="7" height="4" viewBox="0 0 7 4"><path d="M0 0H7L3.5 3.5Z" fill="#f0f0f0"/></svg>
<div class="a" style="left:929px;top:76px;width:306px;height:1px;background:#3f3f46;"></div>
<div class="a" style="left:929px;top:77px;width:306px;height:409px;background:#252526;"></div>
<div class="a" style="left:929px;top:79px;width:289px;height:407px;overflow:hidden">
<svg class="a" style="left:46px;top:7px" width="7" height="12" viewBox="0 0 7 12"><path d="M1.5 1.2V10.8L6.2 6Z" stroke="#f0f0f0" stroke-width="1.1" fill="none" stroke-linejoin="miter"/></svg>
<svg class="a" style="left:68px;top:8px" width="14" height="11" viewBox="-1 -1 14 11"><path d="M5.2 1.9A2.7 2.7 0 1 0 5.2 6.1" stroke="#80d080" stroke-width="2.3" fill="none"/><path d="M7.5 0.5V5.5M9.5 0.5V5.5M6.5 1.8H10.8M6.5 3.8H10.8" stroke="#80d080" stroke-width="1.1" fill="none"/></svg>
<div class="t " style="left:87.30px;top:5.23px;font-size:17.5px;line-height:19.824px;transform:scaleX(0.7619);color:#f1f1f1;">IVsRunningDocTableEvents3Adapter.cs</div>
<svg class="a" style="left:46px;top:27px" width="7" height="12" viewBox="0 0 7 12"><path d="M1.5 1.2V10.8L6.2 6Z" stroke="#f0f0f0" stroke-width="1.1" fill="none" stroke-linejoin="miter"/></svg>
<svg class="a" style="left:68px;top:28px" width="14" height="11" viewBox="-1 -1 14 11"><path d="M5.2 1.9A2.7 2.7 0 1 0 5.2 6.1" stroke="#80d080" stroke-width="2.3" fill="none"/><path d="M7.5 0.5V5.5M9.5 0.5V5.5M6.5 1.8H10.8M6.5 3.8H10.8" stroke="#80d080" stroke-width="1.1" fill="none"/></svg>
<div class="t " style="left:87.30px;top:25.23px;font-size:17.5px;line-height:19.824px;transform:scaleX(0.7619);color:#f1f1f1;">IVsSelectionEventsAdapter.cs</div>
<svg class="a" style="left:46px;top:47px" width="7" height="12" viewBox="0 0 7 12"><path d="M1.5 1.2V10.8L6.2 6Z" stroke="#f0f0f0" stroke-width="1.1" fill="none" stroke-linejoin="miter"/></svg>
<svg class="a" style="left:68px;top:48px" width="14" height="11" viewBox="-1 -1 14 11"><path d="M5.2 1.9A2.7 2.7 0 1 0 5.2 6.1" stroke="#80d080" stroke-width="2.3" fill="none"/><path d="M7.5 0.5V5.5M9.5 0.5V5.5M6.5 1.8H10.8M6.5 3.8H10.8" stroke="#80d080" stroke-width="1.1" fill="none"/></svg>
<div class="t " style="left:87.30px;top:45.23px;font-size:17.5px;line-height:19.824px;transform:scaleX(0.7619);color:#f1f1f1;">IVsSolutionEventsAdapter.cs</div>
<svg class="a" style="left:46px;top:67px" width="7" height="12" viewBox="0 0 7 12"><path d="M1.5 1.2V10.8L6.2 6Z" stroke="#f0f0f0" stroke-width="1.1" fill="none" stroke-linejoin="miter"/></svg>
<svg class="a" style="left:68px;top:68px" width="14" height="11" viewBox="-1 -1 14 11"><path d="M5.2 1.9A2.7 2.7 0 1 0 5.2 6.1" stroke="#80d080" stroke-width="2.3" fill="none"/><path d="M7.5 0.5V5.5M9.5 0.5V5.5M6.5 1.8H10.8M6.5 3.8H10.8" stroke="#80d080" stroke-width="1.1" fill="none"/></svg>
<div class="t " style="left:87.30px;top:65.23px;font-size:17.5px;line-height:19.824px;transform:scaleX(0.7619);color:#f1f1f1;">JetbrainsAnnotations.cs</div>
<svg class="a" style="left:49px;top:86px" width="15" height="15" viewBox="0 0 15 15"><path d="M4.8 3V0.8H11.3L13.7 3.2V11.5H5.5" stroke="#d0d0d0" stroke-width="1.2" fill="none"/><circle cx="2.9" cy="6.6" r="2.7" fill="#d0d0d0"/><rect x="2.2" y="3.5" width="1.4" height="3.2" fill="#252526"/><rect x="1.8" y="8" width="2.2" height="6" fill="#d0d0d0"/></svg>
<div class="t " style="left:69.30px;top:85.23px;font-size:17.5px;line-height:19.824px;transform:scaleX(0.7619);color:#f1f1f1;">app.config</div>
<svg class="a" style="left:49px;top:110px" width="15" height="8" viewBox="0 0 15 8"><path d="M1 7.5V0.8L4 4.5L7 0.8V7.5" stroke="#d0d0d0" stroke-width="1.8" fill="none"/><path d="M11.5 0.5V5.5M9 4L11.5 7L14 4" stroke="#d0d0d0" stroke-width="1.6" fill="none"/></svg>
<div class="t " style="left:69.30px;top:105.23px;font-size:17.5px;line-height:19.824px;transform:scaleX(0.7619);color:#f1f1f1;">CHANGELOG.MD</div>
<svg class="a" style="left:28px;top:127px" width="7" height="12" viewBox="0 0 7 12"><path d="M1.5 1.2V10.8L6.2 6Z" stroke="#f0f0f0" stroke-width="1.1" fill="none" stroke-linejoin="miter"/></svg>
<svg class="a" style="left:50px;top:128px" width="14" height="11" viewBox="-1 -1 14 11"><path d="M5.2 1.9A2.7 2.7 0 1 0 5.2 6.1" stroke="#80d080" stroke-width="2.3" fill="none"/><path d="M7.5 0.5V5.5M9.5 0.5V5.5M6.5 1.8H10.8M6.5 3.8H10.8" stroke="#80d080" stroke-width="1.1" fill="none"/></svg>
<div class="t " style="left:69.30px;top:125.23px;font-size:17.5px;line-height:19.824px;transform:scaleX(0.7619);color:#f1f1f1;">DocumentNode.cs</div>
<svg class="a" style="left:28px;top:147px" width="7" height="12" viewBox="0 0 7 12"><path d="M1.5 1.2V10.8L6.2 6Z" stroke="#f0f0f0" stroke-width="1.1" fill="none" stroke-linejoin="miter"/></svg>
<svg class="a" style="left:50px;top:148px" width="14" height="11" viewBox="-1 -1 14 11"><path d="M5.2 1.9A2.7 2.7 0 1 0 5.2 6.1" stroke="#80d080" stroke-width="2.3" fill="none"/><path d="M7.5 0.5V5.5M9.5 0.5V5.5M6.5 1.8H10.8M6.5 3.8H10.8" stroke="#80d080" stroke-width="1.1" fill="none"/></svg>
<div class="t " style="left:69.30px;top:145.23px;font-size:17.5px;line-height:19.824px;transform:scaleX(0.7619);color:#f1f1f1;">DocumentRepository.cs</div>
<svg class="a" style="left:28px;top:167px" width="7" height="12" viewBox="0 0 7 12"><path d="M1.5 1.2V10.8L6.2 6Z" stroke="#f0f0f0" stroke-width="1.1" fill="none" stroke-linejoin="miter"/></svg>
<svg class="a" style="left:50px;top:168px" width="14" height="11" viewBox="-1 -1 14 11"><path d="M5.2 1.9A2.7 2.7 0 1 0 5.2 6.1" stroke="#80d080" stroke-width="2.3" fill="none"/><path d="M7.5 0.5V5.5M9.5 0.5V5.5M6.5 1.8H10.8M6.5 3.8H10.8" stroke="#80d080" stroke-width="1.1" fill="none"/></svg>
<div class="t " style="left:69.30px;top:165.23px;font-size:17.5px;line-height:19.824px;transform:scaleX(0.7619);color:#f1f1f1;">EnvDTEConstants.cs</div>
<svg class="a" style="left:50px;top:188px" width="14" height="11" viewBox="-1 -1 14 11"><path d="M5.2 1.9A2.7 2.7 0 1 0 5.2 6.1" stroke="#80d080" stroke-width="2.3" fill="none"/><path d="M7.5 0.5V5.5M9.5 0.5V5.5M6.5 1.8H10.8M6.5 3.8H10.8" stroke="#80d080" stroke-width="1.1" fill="none"/></svg>
<div class="t " style="left:69.30px;top:185.23px;font-size:17.5px;line-height:19.824px;transform:scaleX(0.7619);color:#f1f1f1;">GlobalSuppressions.cs</div>
<svg class="a" style="left:28px;top:207px" width="7" height="12" viewBox="0 0 7 12"><path d="M1.5 1.2V10.8L6.2 6Z" stroke="#f0f0f0" stroke-width="1.1" fill="none" stroke-linejoin="miter"/></svg>
<svg class="a" style="left:50px;top:208px" width="14" height="11" viewBox="-1 -1 14 11"><path d="M5.2 1.9A2.7 2.7 0 1 0 5.2 6.1" stroke="#80d080" stroke-width="2.3" fill="none"/><path d="M7.5 0.5V5.5M9.5 0.5V5.5M6.5 1.8H10.8M6.5 3.8H10.8" stroke="#80d080" stroke-width="1.1" fill="none"/></svg>
<div class="t " style="left:69.30px;top:205.23px;font-size:17.5px;line-height:19.824px;transform:scaleX(0.7619);color:#f1f1f1;">Guids.cs</div>
<svg class="a" style="left:51px;top:227px" width="12" height="13" viewBox="0 0 12 13"><path d="M0.5 0.5H7L9.5 3V11.5H0.5Z" stroke="#d0d0d0" stroke-width="1" fill="none"/><path d="M2 3.5H6M2 5.5H8M2 7.5H8M2 9.5H8" stroke="#d0d0d0" stroke-width="1"/></svg>
<div class="t " style="left:69.30px;top:225.23px;font-size:17.5px;line-height:19.824px;transform:scaleX(0.7619);color:#f1f1f1;">License.txt</div>
<svg class="a" style="left:49px;top:245px" width="16" height="16" viewBox="0 0 16 16"><path d="M4.5 3V0.5H10.5L13.5 3.5V12.5H10" stroke="#d0d0d0" stroke-width="1" fill="none"/><path d="M2.5 10.2L0.8 12.5L2.5 14.8M8.5 10.2L10.2 12.5L8.5 14.8" stroke="#d0d0d0" stroke-width="1" fill="none"/><rect x="3.3" y="10.8" width="4.4" height="3.6" fill="#d0d0d0"/><path d="M4.2 10.8V9.8A1.3 1.3 0 0 1 6.8 9.8V10.8" stroke="#d0d0d0" stroke-width="0.9" fill="none"/></svg>
<div class="t " style="left:69.30px;top:245.23px;font-size:17.5px;line-height:19.824px;transform:scaleX(0.7619);color:#f1f1f1;">LocalHistory.vsct</div>
<svg class="a" style="left:28px;top:270px" width="8" height="8" viewBox="0 0 8 8"><path d="M7 1V7H1Z" fill="#e8e8e8"/></svg>
<svg class="a" style="left:49px;top:265px" width="16" height="16" viewBox="0 0 16 16"><path d="M4.5 10V0.5H13.5V12.5H12" stroke="#d0d0d0" stroke-width="1" fill="none"/><path d="M2.5 10.2L0.8 12.5L2.5 14.8M11 10.2L12.7 12.5L11 14.8" stroke="#d0d0d0" stroke-width="1" fill="none"/><rect x="3.5" y="10.8" width="3" height="3.5" fill="#d0d0d0"/><rect x="7" y="10.8" width="3" height="3.5" fill="#d0d0d0"/></svg>
<div class="t " style="left:69.30px;top:265.23px;font-size:17.5px;line-height:19.824px;transform:scaleX(0.7619);color:#f1f1f1;">LocalHistoryControl.xaml</div>
<svg class="a" style="left:46px;top:287px" width="7" height="12" viewBox="0 0 7 12"><path d="M1.5 1.2V10.8L6.2 6Z" stroke="#f0f0f0" stroke-width="1.1" fill="none" stroke-linejoin="miter"/></svg>
<svg class="a" style="left:66px;top:286px" width="16" height="16" viewBox="0 0 16 16"><path d="M7.5 1.5H10.5L13.5 4.5V13.5H3.5V8" stroke="#d0d0d0" stroke-width="1" fill="none"/><path d="M0.8 4H6.5M4.2 1.5L6.8 4L4.2 6.5" stroke="#4aa8f0" stroke-width="1.4" fill="none"/></svg>
<div class="t " style="left:87.30px;top:285.23px;font-size:17.5px;line-height:19.824px;transform:scaleX(0.7619);color:#f1f1f1;">LocalHistoryControl.xaml.cs</div>
<svg class="a" style="left:28px;top:307px" width="7" height="12" viewBox="0 0 7 12"><path d="M1.5 1.2V10.8L6.2 6Z" stroke="#f0f0f0" stroke-width="1.1" fill="none" stroke-linejoin="miter"/></svg>
<svg class="a" style="left:50px;top:308px" width="14" height="11" viewBox="-1 -1 14 11"><path d="M5.2 1.9A2.7 2.7 0 1 0 5.2 6.1" stroke="#80d080" stroke-width="2.3" fill="none"/><path d="M7.5 0.5V5.5M9.5 0.5V5.5M6.5 1.8H10.8M6.5 3.8H10.8" stroke="#80d080" stroke-width="1.1" fill="none"/></svg>
<div class="t " style="left:69.30px;top:305.23px;font-size:17.5px;line-height:19.824px;transform:scaleX(0.7619);color:#f1f1f1;">LocalHistoryDocumentListener.cs</div>
<div class="a" style="left:0px;top:322px;width:289px;height:21px;background:#007acc;"></div>
<svg class="a" style="left:28px;top:327px" width="7" height="12" viewBox="0 0 7 12"><path d="M1.5 1.2V10.8L6.2 6Z" stroke="#f0f0f0" stroke-width="1.1" fill="none" stroke-linejoin="miter"/></svg>
<svg class="a" style="left:50px;top:328px" width="14" height="11" viewBox="-1 -1 14 11"><path d="M5.2 1.9A2.7 2.7 0 1 0 5.2 6.1" stroke="#1e1e1e" stroke-width="4.3" fill="none"/><path d="M7.5 0.5V5.5M9.5 0.5V5.5M6.5 1.8H10.8M6.5 3.8H10.8" stroke="#1e1e1e" stroke-width="3.1" fill="none"/><path d="M5.2 1.9A2.7 2.7 0 1 0 5.2 6.1" stroke="#80d080" stroke-width="2.3" fill="none"/><path d="M7.5 0.5V5.5M9.5 0.5V5.5M6.5 1.8H10.8M6.5 3.8H10.8" stroke="#80d080" stroke-width="1.1" fill="none"/></svg>
<div class="t " style="left:69.30px;top:325.23px;font-size:17.5px;line-height:19.824px;transform:scaleX(0.7619);color:#f1f1f1;">LocalHistoryPackage.cs</div>
<svg class="a" style="left:28px;top:347px" width="7" height="12" viewBox="0 0 7 12"><path d="M1.5 1.2V10.8L6.2 6Z" stroke="#f0f0f0" stroke-width="1.1" fill="none" stroke-linejoin="miter"/></svg>
<svg class="a" style="left:50px;top:348px" width="14" height="11" viewBox="-1 -1 14 11"><path d="M5.2 1.9A2.7 2.7 0 1 0 5.2 6.1" stroke="#80d080" stroke-width="2.3" fill="none"/><path d="M7.5 0.5V5.5M9.5 0.5V5.5M6.5 1.8H10.8M6.5 3.8H10.8" stroke="#80d080" stroke-width="1.1" fill="none"/></svg>
<div class="t " style="left:69.30px;top:345.23px;font-size:17.5px;line-height:19.824px;transform:scaleX(0.7619);color:#f1f1f1;">LocalHistoryToolWindow.cs</div>
<svg class="a" style="left:28px;top:367px" width="7" height="12" viewBox="0 0 7 12"><path d="M1.5 1.2V10.8L6.2 6Z" stroke="#f0f0f0" stroke-width="1.1" fill="none" stroke-linejoin="miter"/></svg>
<svg class="a" style="left:49px;top:365px" width="16" height="16" viewBox="0 0 16 16"><path d="M4.5 7V1.5H10.5L13.5 4.5V12.5H7" stroke="#d0d0d0" stroke-width="1" fill="none"/><rect x="0.5" y="12" width="5" height="3" fill="#d0d0d0"/><rect x="3" y="9.5" width="2.5" height="3" fill="#d0d0d0"/><rect x="1.6" y="13" width="0.9" height="0.9" fill="#252526"/><rect x="3.8" y="13" width="0.9" height="0.9" fill="#252526"/><rect x="3.8" y="10.5" width="0.9" height="0.9" fill="#252526"/></svg>
<div class="t " style="left:69.30px;top:365.23px;font-size:17.5px;line-height:19.824px;transform:scaleX(0.7619);color:#f1f1f1;">OptionsPage.cs</div>
<svg class="a" style="left:49px;top:386px" width="15" height="15" viewBox="0 0 15 15"><path d="M4.8 3V0.8H11.3L13.7 3.2V11.5H5.5" stroke="#d0d0d0" stroke-width="1.2" fill="none"/><circle cx="2.9" cy="6.6" r="2.7" fill="#d0d0d0"/><rect x="2.2" y="3.5" width="1.4" height="3.2" fill="#252526"/><rect x="1.8" y="8" width="2.2" height="6" fill="#d0d0d0"/></svg>
<div class="t " style="left:69.30px;top:385.23px;font-size:17.5px;line-height:19.824px;transform:scaleX(0.7619);color:#f1f1f1;">packages.config</div>
</div>
<div class="a" style="left:1218px;top:79px;width:17px;height:407px;background:#3e3e42;"></div>
<svg class="a" style="left:1222px;top:87px" width="10" height="6" viewBox="0 0 10 6"><path d="M0.5 5.5H9.5L5 0.5Z" fill="#999999"/></svg>
<div class="a" style="left:1222px;top:177px;width:9px;height:225px;background:#686868;"></div>
<svg class="a" style="left:1222px;top:474px" width="10" height="6" viewBox="0 0 10 6"><path d="M0.5 0.5H9.5L5 5.5Z" fill="#999999"/></svg>
<div class="a" style="left:929px;top:486px;width:289px;height:17px;background:#3e3e42;"></div>
<div class="a" style="left:1218px;top:486px;width:17px;height:17px;background:#333337;"></div>
<svg class="a" style="left:935px;top:490px" width="6" height="10" viewBox="0 0 6 10"><path d="M5.5 0.5V9.5L0.5 5Z" fill="#999999"/></svg>
<div class="a" style="left:946px;top:490px;width:200px;height:9px;background:#686868;"></div>
<svg class="a" style="left:1208px;top:490px" width="6" height="10" viewBox="0 0 6 10"><path d="M0.5 0.5V9.5L5.5 5Z" fill="#999999"/></svg>
<div class="a" style="left:929px;top:503px;width:306px;height:8px;background:#3f3f46;"></div>
<div class="a" style="left:929px;top:511px;width:306px;height:24px;background:#2d2d30;"></div>
<div class="t " style="left:934.00px;top:514.83px;font-size:17.5px;line-height:19.824px;transform:scaleX(0.7619);color:#d0d0d0;">Local History  - LocalHistory…</div>
<svg class="a" style="left:1179px;top:520px" width="9" height="6" viewBox="0 0 9 6"><path d="M0.5 0.5H8.5L4.5 5Z" fill="#f0f0f0"/></svg>
<svg class="a" style="left:1197px;top:516px" width="11" height="12" viewBox="0 0 11 12"><path d="M3.5 1H7.5M4 1V6.5H7V1M2 7H9M5.5 7V11.5" stroke="#f0f0f0" stroke-width="1.3" fill="none"/></svg>
<svg class="a" style="left:1216px;top:517px" width="11" height="11" viewBox="0 0 11 11"><path d="M1 1.5L10 10M10 1.5L1 10" stroke="#f0f0f0" stroke-width="1.4" fill="none"/></svg>
<div class="a" style="left:929px;top:535px;width:306px;height:156px;background:#252526;"></div>
<div class="a" style="left:931px;top:542px;width:12px;height:11px;background:#ffffff;"></div>
<div class="t " style="left:950.00px;top:539.53px;font-size:17.5px;line-height:19.824px;transform:scaleX(0.7619);color:#f1f1f1;">Show only labelled</div>
<div class="a" style="left:931px;top:591px;width:285px;height:27px;background:#3f3f46;"></div>
<div class="t " style="left:937.00px;top:568.13px;font-size:17.5px;line-height:19.824px;transform:scaleX(0.7619);color:#f1f1f1;">19/10/2017 02:45:34</div>
<div class="t " style="left:937.00px;top:596.13px;font-size:17.5px;line-height:19.824px;transform:scaleX(0.7619);color:#f1f1f1;">13/04/2017 08:05:46 SomeLabel</div>
<div class="t " style="left:937.00px;top:624.13px;font-size:17.5px;line-height:19.824px;transform:scaleX(0.7619);color:#f1f1f1;">13/04/2017 08:05:44</div>
<div class="t " style="left:937.00px;top:652.13px;font-size:17.5px;line-height:19.824px;transform:scaleX(0.7619);color:#f1f1f1;">13/04/2017 08:05:28</div>
<div class="t " style="left:937.00px;top:680.13px;font-size:17.5px;line-height:19.824px;transform:scaleX(0.7619);color:#f1f1f1;">13/04/2017 08:05:19</div>
<div class="a" style="left:1218px;top:560px;width:17px;height:131px;background:#3e3e42;"></div>
<svg class="a" style="left:1222px;top:565px" width="10" height="6" viewBox="0 0 10 6"><path d="M0.5 5.5H9.5L5 0.5Z" fill="#999999"/></svg>
<div class="a" style="left:1222px;top:577px;width:9px;height:8px;background:#686868;"></div>
</body></html>
